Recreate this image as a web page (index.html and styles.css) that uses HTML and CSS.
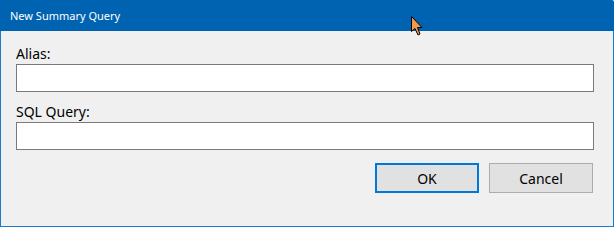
FILE: index.html
```html
<!DOCTYPE html>
<html lang="en">
<head>
    <meta charset="UTF-8">
    <title>New Summary Query</title>
    <link rel="stylesheet" href="styles.css">
</head>
<body>
    <div class="dialog">
        <div class="title-bar">New Summary Query</div>
        <div class="dialog-body">
            <label class="field-label" for="alias">Alias:</label>
            <input type="text" id="alias" class="field-input">
            <label class="field-label" for="sql-query">SQL Query:</label>
            <input type="text" id="sql-query" class="field-input">
            <div class="button-row">
                <button class="btn default">OK</button>
                <button class="btn">Cancel</button>
            </div>
        </div>
        <svg class="cursor" width="14" height="22" viewBox="0 0 14 22">
            <path d="M0.5 0.5 L0.5 15.5 L4 12.5 L7 19 L9 18 L6.5 11.5 L11 11.5 Z" fill="#f7994a" stroke="#000" stroke-width="1"/>
        </svg>
    </div>
</body>
</html>
```

FILE: styles.css
```css
* {
    margin: 0;
    padding: 0;
    box-sizing: border-box;
}

body {
    background: #fff;
    font-family: 'Noto Sans', 'Open Sans', Arial, sans-serif;
    color: #000;
}

.dialog {
    position: relative;
    width: 614px;
    height: 227px;
    display: flex;
    flex-direction: column;
}

.title-bar {
    height: 31px;
    background: #0063b1;
    color: #fff;
    font-size: 11px;
    padding-left: 10px;
    padding-bottom: 1px;
    display: flex;
    align-items: center;
    border-top-right-radius: 2px;
}

.dialog-body {
    flex: 1;
    background: #f0f0f0;
    border: 1px solid #1979ca;
    border-top: none;
    padding: 13px 19px 0 15px;
    display: flex;
    flex-direction: column;
}

.field-label {
    font-size: 14px;
    line-height: 20px;
    height: 20px;
}

.field-input {
    height: 28px;
    width: 100%;
    border: 1px solid #7a7a7a;
    background: #fff;
    font-size: 14px;
    outline: none;
    margin-bottom: 10px;
}

.button-row {
    display: flex;
    justify-content: flex-end;
    gap: 10px;
    margin-top: 3px;
    padding-right: 1px;
}

.btn {
    width: 104px;
    height: 30px;
    background: #e1e1e1;
    border: 1px solid #adadad;
    font-family: inherit;
    font-size: 14px;
    color: #000;
}

.btn.default {
    border: 2px solid #0078d7;
}

.cursor {
    position: absolute;
    left: 411px;
    top: 16px;
}
```
